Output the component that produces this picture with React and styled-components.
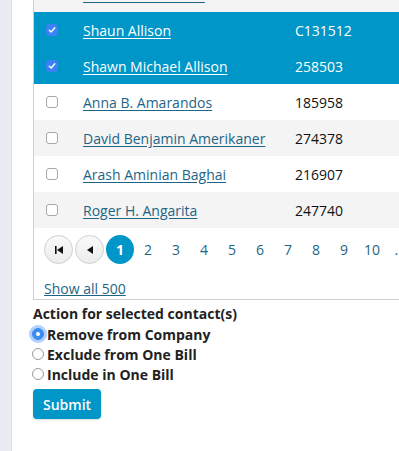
import React from 'react';
import styled, { createGlobalStyle } from 'styled-components';

const GlobalStyle = createGlobalStyle`
  html, body {
    margin: 0;
    padding: 0;
    overflow: hidden;
    background: #fff;
    font-family: "Open Sans", "Liberation Sans", sans-serif;
    color: #222;
  }
`;

const Page = styled.div`
  display: flex;
  min-height: 451px;
`;

const Sidebar = styled.div`
  width: 11px;
  flex: none;
  background: #e9ecf0;
  border-right: 1px solid #d9dce1;
`;

const Main = styled.div`
  padding-left: 21px;
  flex: 1;
`;

const TableBox = styled.div`
  width: 420px;
  margin-top: -24px;
  border: 1px solid #cfcfcf;
  border-top: none;
`;

const Row = styled.div`
  display: flex;
  align-items: center;
  height: 36px;
  background: ${p => (p.$selected ? '#0096c7' : p.$striped ? '#f4f4f4' : '#fff')};
  color: ${p => (p.$selected ? '#fff' : '#111')};
  font-size: 14px;
`;

const CheckCell = styled.div`
  width: 49px;
  padding-left: 12px;
  box-sizing: border-box;
  display: flex;
  align-items: center;
`;

const Check = styled.span`
  width: 12px;
  height: 12px;
  box-sizing: border-box;
  border-radius: 3px;
  border: 1px solid ${p => (p.$checked ? '#3b82f6' : '#a9a9a9')};
  background: ${p => (p.$checked ? '#3b82f6' : '#fff')};
  display: flex;
  align-items: center;
  justify-content: center;
`;

const NameCell = styled.div`
  width: 212px;
`;

const NameLink = styled.a`
  color: ${p => (p.$selected ? '#fff' : '#1d6586')};
  text-decoration: underline;
  text-underline-offset: 2px;
  cursor: pointer;
`;

const IdCell = styled.div`
  margin-top: ${p => (p.$hidden ? '-6px' : '0')};
`;

const Footer = styled.div`
  padding: 7px 10px 0 10px;
`;

const Pager = styled.div`
  display: flex;
  align-items: center;
`;

const NavButton = styled.button`
  width: 29px;
  height: 29px;
  border-radius: 50%;
  border: 1px solid #cfcfcf;
  background: linear-gradient(#fafafa, #ececec);
  display: flex;
  align-items: center;
  justify-content: center;
  padding: 0;
  margin-right: 2px;
  flex: none;
`;

const PageNum = styled.span`
  width: 28px;
  height: 29px;
  border-radius: 50%;
  display: flex;
  align-items: center;
  justify-content: center;
  font-size: 14px;
  font-weight: ${p => (p.$active ? 700 : 400)};
  background: ${p => (p.$active ? '#0096c7' : 'transparent')};
  color: ${p => (p.$active ? '#fff' : '#1d6586')};
  flex: none;
`;

const ShowAll = styled.a`
  display: block;
  margin-top: 15px;
  padding-bottom: 1px;
  font-size: 14px;
  line-height: 19px;
  color: #1d6586;
  text-decoration: underline;
`;

const ActionForm = styled.div`
  font-size: 14px;
  font-weight: 700;
  color: #222;
`;

const ActionTitle = styled.div`
  margin-top: 4px;
  line-height: 20px;
`;

const RadioRow = styled.label`
  display: flex;
  align-items: center;
  height: 20px;
  gap: 3px;
`;

const Radio = styled.span`
  width: 12px;
  height: 12px;
  margin-left: -1px;
  box-sizing: border-box;
  border-radius: 50%;
  border: 1px solid ${p => (p.$checked ? '#3b8cf0' : '#9a9a9a')};
  background: ${p => (p.$checked ? '#3b8cf0' : '#fff')};
  box-shadow: ${p => (p.$checked ? '0 0 0 3px rgba(80,150,250,0.45)' : 'none')};
  display: flex;
  align-items: center;
  justify-content: center;
  flex: none;
  &::after {
    content: '';
    display: ${p => (p.$checked ? 'block' : 'none')};
    width: 4px;
    height: 4px;
    border-radius: 50%;
    background: #fff;
  }
`;

const SubmitButton = styled.button`
  margin-top: 5px;
  height: 30px;
  padding: 0 10px;
  border: none;
  border-radius: 4px;
  background: #0096c7;
  color: #fff;
  font-family: inherit;
  font-size: 14px;
  font-weight: 600;
  box-shadow: 0 1px 2px rgba(0,0,0,0.15);
`;

const contacts = [
  { name: 'Robert Allard Allen', id: '301427', offscreen: true },
  { name: 'Shaun Allison', id: 'C131512', selected: true },
  { name: 'Shawn Michael Allison', id: '258503', selected: true },
  { name: 'Anna B. Amarandos', id: '185958' },
  { name: 'David Benjamin Amerikaner', id: '274378' },
  { name: 'Arash Aminian Baghai', id: '216907' },
  { name: 'Roger H. Angarita', id: '247740' },
];

const CheckMark = () => (
  <svg width="8" height="8" viewBox="0 0 8 8">
    <path d="M1.3 4.2 L3.2 6 L6.8 1.8" fill="none" stroke="#fff" strokeWidth="1.4" strokeLinecap="round" strokeLinejoin="round" />
  </svg>
);

export default function App() {
  return (
    <>
      <GlobalStyle />
      <Page>
        <Sidebar />
        <Main>
          <TableBox>
            {contacts.map((c, i) => (
              <Row key={c.name} $selected={c.selected} $striped={i % 2 === 0}>
                <CheckCell>
                  <Check $checked={c.selected}>{c.selected && <CheckMark />}</Check>
                </CheckCell>
                <NameCell>
                  <NameLink $selected={c.selected}>{c.name}</NameLink>
                </NameCell>
                <IdCell $hidden={c.offscreen}>{c.id}</IdCell>
              </Row>
            ))}
            <Footer>
              <Pager>
                <NavButton aria-label="First page">
                  <svg width="10" height="10" viewBox="0 0 10 10">
                    <rect x="1" y="1" width="1.6" height="8" fill="#111" />
                    <path d="M9 1 L3 5 L9 9 Z" fill="#111" />
                  </svg>
                </NavButton>
                <NavButton aria-label="Previous page">
                  <svg width="10" height="10" viewBox="0 0 10 10">
                    <path d="M8 1 L2 5 L8 9 Z" fill="#111" />
                  </svg>
                </NavButton>
                {['1', '2', '3', '4', '5', '6', '7', '8', '9', '10', '...'].map((n, i) => (
                  <PageNum key={n} $active={i === 0}>{n}</PageNum>
                ))}
              </Pager>
              <ShowAll>Show all 500</ShowAll>
            </Footer>
          </TableBox>
          <ActionForm>
            <ActionTitle>Action for selected contact(s)</ActionTitle>
            <RadioRow><Radio $checked />Remove from Company</RadioRow>
            <RadioRow><Radio />Exclude from One Bill</RadioRow>
            <RadioRow><Radio />Include in One Bill</RadioRow>
            <SubmitButton>Submit</SubmitButton>
          </ActionForm>
        </Main>
      </Page>
    </>
  );
}
